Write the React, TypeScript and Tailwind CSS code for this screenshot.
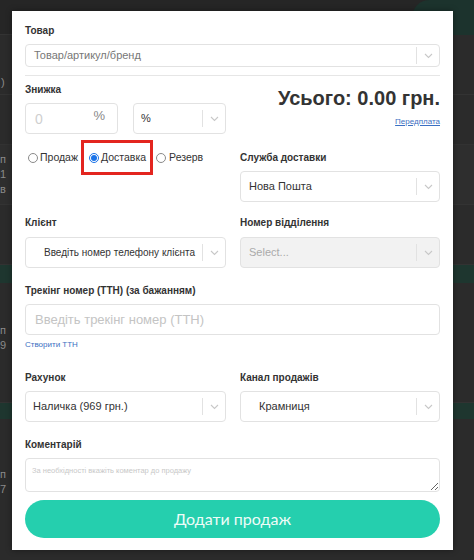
import React from 'react'

const Chevron = () => (
  <svg width="9" height="6" viewBox="0 0 9 6" fill="none">
    <path d="M1 1l3.5 3.5L8 1" stroke="#c8c8c8" strokeWidth="1.1" />
  </svg>
)

interface SelectProps {
  text: string
  textClass: string
  height?: string
  disabled?: boolean
}

const Select: React.FC<SelectProps> = ({ text, textClass, height = 'h-[31px]', disabled }) => (
  <div
    className={`flex items-center ${height} rounded-[4px] border border-[#e2e2e2] ${disabled ? 'bg-[#f2f2f2]' : 'bg-white'}`}
  >
    <span className={`flex-1 whitespace-nowrap overflow-hidden ${textClass}`}>{text}</span>
    <span className="w-px h-[17px] bg-[#e2e2e2]" />
    <span className="w-[22px] flex justify-center">
      <Chevron />
    </span>
  </div>
)

const Label: React.FC<{ children: React.ReactNode; className?: string }> = ({ children, className = '' }) => (
  <div className={`text-[10px] leading-[12px] font-bold text-[#333] mb-[7px] ${className}`}>{children}</div>
)

const Radio: React.FC<{ checked?: boolean }> = ({ checked }) => (
  <span
    className={`inline-flex items-center justify-center w-[10px] h-[10px] rounded-full border ${checked ? 'border-[#1a73e8]' : 'border-[#8a8a8a]'} bg-white`}
  >
    {checked && <span className="w-[6px] h-[6px] rounded-full bg-[#1a73e8]" />}
  </span>
)

// dimmed page that sits behind the modal
const Backdrop = () => (
  <div className="flex flex-col h-[560px] bg-[#2b2b2b] text-[#8a8a8a] text-[11px] font-['Liberation_Sans',sans-serif]">
    <div className="h-[35px] bg-[#262626] border-b border-[#333] flex justify-end">
      <div className="w-[62px] h-[35px] rounded-l-[28px] bg-[#1c332d]" />
    </div>
    <div className="h-[60px] border-b border-[#333] flex items-end pb-[4px]">
      <span className="pl-[1px]">)</span>
    </div>
    <div className="h-[50px] border-b border-[#323232]" />
    <div className="h-[60px] border-b border-[#333] bg-[#2e2e2e] flex flex-col justify-center leading-[15px]">
      <span>п</span>
      <span>1</span>
      <span>в</span>
    </div>
    <div className="h-[60px] border-b border-[#323232]" />
    <div className="h-[18px] bg-[#1e362f]" />
    <div className="h-[40px]" />
    <div className="h-[30px] flex flex-col leading-[15px]">
      <span>п</span>
      <span>9</span>
    </div>
    <div className="h-[50px] border-b border-[#323232]" />
    <div className="h-[16px] bg-[#1e362f]" />
    <div className="h-[48px]" />
    <div className="h-[30px] flex flex-col leading-[15px]">
      <span>п</span>
      <span>7</span>
    </div>
  </div>
)

export default function App() {
  return (
    <div className="relative w-[474px] h-[560px] overflow-hidden font-['Liberation_Sans',Arial,sans-serif]">
      <Backdrop />

      <div className="absolute left-[12px] top-[11px] w-[441px] bg-white px-[13px] pt-[14px] pb-[12px] shadow-[0_0_6px_rgba(0,0,0,0.4)]">
        <Label>Товар</Label>
        <Select text="Товар/артикул/бренд" textClass="pl-[8px] text-[11px] text-[#777]" height="h-[23px]" />

        <div className="h-px bg-[#e6e6e6] mt-[8px]" />

        <div className="flex mt-[8px]">
          <div className="w-[201px]">
            <Label>Знижка</Label>
            <div className="flex gap-[15px]">
              <div className="relative w-[93px] h-[31px] rounded-[4px] border border-[#e2e2e2] flex items-center">
                <span className="pl-[9px] pt-[2px] text-[14px] text-[#cfcfcf]">0</span>
                <span className="absolute right-[12px] top-[2px] text-[13px] text-[#888]">%</span>
              </div>
              <div className="w-[93px]">
                <Select text="%" textClass="pl-[7px] text-[11px] text-[#333]" />
              </div>
            </div>
          </div>
          <div className="flex-1 flex flex-col items-end pt-[3px]">
            <div className="text-[20px] leading-[22px] font-bold text-[#333]">Усього: 0.00 грн.</div>
            <a className="mt-[8px] text-[8px] leading-[10px] text-[#3b6fc2] underline">Передплата</a>
          </div>
        </div>

        <div className="grid grid-cols-[201px_200px] gap-x-[14px] mt-[6px]">
          <div className="flex items-start h-[35px]">
            <div className="flex items-center h-[35px] text-[10.5px] text-[#333]">
              <span className="ml-[3px] flex">
                <Radio />
              </span>
              <span className="ml-[2px]">Продаж</span>
              <span className="ml-[3px] flex items-center h-[35px] border-[3px] border-[#e3251f] pl-[5px] pr-[4px]">
                <Radio checked />
                <span className="ml-[2px]">Доставка</span>
              </span>
              <span className="ml-[3px] flex">
                <Radio />
              </span>
              <span className="ml-[3px]">Резерв</span>
            </div>
          </div>
          <div className="pt-[12px]">
            <Label>Служба доставки</Label>
            <Select text="Нова Пошта" textClass="pl-[8px] text-[11px] text-[#333]" />
          </div>

          <div className="mt-[15px]">
            <Label className="mb-[8px]">Клієнт</Label>
            <Select text="Введіть номер телефону клієнта" textClass="pl-[18px] text-[10px] text-[#333]" />
          </div>
          <div className="mt-[15px]">
            <Label className="mb-[8px]">Номер відділення</Label>
            <Select text="Select..." textClass="pl-[8px] text-[11px] text-[#aaa]" disabled />
          </div>
        </div>

        <div className="mt-[17px]">
          <Label className="mb-[6px]">Трекінг номер (ТТН) (за бажанням)</Label>
          <div className="h-[31px] rounded-[4px] border border-[#e2e2e2] flex items-center pl-[9px] text-[13px] text-[#c4c4c4]">
            Введіть трекінг номер (ТТН)
          </div>
          <a className="block mt-[5px] text-[8px] leading-[10px] text-[#3b6fc2]">Створити ТТН</a>
        </div>

        <div className="grid grid-cols-[201px_200px] gap-x-[14px] mt-[22px]">
          <div>
            <Label className="mb-[6px]">Рахунок</Label>
            <Select text="Наличка (969 грн.)" textClass="pl-[7px] text-[11px] text-[#333]" />
          </div>
          <div>
            <Label className="mb-[6px]">Канал продажів</Label>
            <Select text="Крамниця" textClass="pl-[18px] text-[11px] text-[#333]" />
          </div>
        </div>

        <div className="mt-[17px]">
          <Label className="mb-[6px]">Коментарій</Label>
          <textarea
            className="block w-full h-[34px] rounded-[4px] border border-[#e2e2e2] px-[6px] pt-[7px] text-[7.5px] leading-[10px] outline-none resize-y placeholder:text-[#c8c8c8]"
            placeholder="За необхідності вкажіть коментар до продажу"
          />
        </div>

        <button
          type="button"
          className="mt-[8px] w-full h-[38px] rounded-full bg-[#25cfae] text-[#eefcf8] text-[16px] font-['Lato',sans-serif]"
        >
          Додати продаж
        </button>
      </div>
    </div>
  )
}
